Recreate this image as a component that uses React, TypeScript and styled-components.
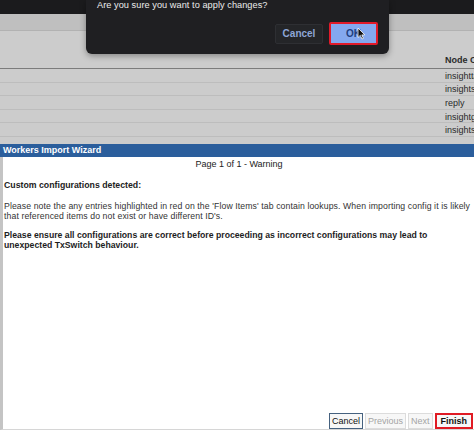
import React from 'react';
import styled, { createGlobalStyle } from 'styled-components';

const GlobalStyle = createGlobalStyle`
  html, body {
    margin: 0;
    padding: 0;
    background: #ffffff;
    font-family: "Liberation Sans", Arial, sans-serif;
  }
`;

const Screen = styled.div`
  position: relative;
  width: 474px;
  height: 430px;
  overflow: hidden;
  display: flex;
  flex-direction: column;
  background: #ffffff;
`;

const DarkStrip = styled.div`
  height: 14px;
  background: #1b1b1d;
  flex-shrink: 0;
`;

const Toolbar = styled.div`
  height: 16px;
  background: #bfbfbf;
  border-bottom: 1px solid #b2b2b2;
  flex-shrink: 0;
`;

const TableArea = styled.div`
  background: #cccccc;
  display: flex;
  flex-direction: column;
  flex-shrink: 0;
  padding-bottom: 7px;
`;

const HeaderRow = styled.div`
  height: 38px;
  display: grid;
  grid-template-columns: 1fr 29px;
  align-items: end;
  border-bottom: 1px solid #7c7c7c;
  box-sizing: border-box;
`;

const Row = styled.div`
  height: 13.6px;
  display: grid;
  grid-template-columns: 1fr 29px;
  align-items: center;
  border-bottom: 1px solid #bdbdbd;
  box-sizing: border-box;
  padding-top: 1px;
`;

const Cell = styled.div<{ $bold?: boolean }>`
  font-size: 9px;
  font-weight: ${(p) => (p.$bold ? 700 : 400)};
  color: #2a2a2a;
  white-space: nowrap;
  overflow: hidden;
  padding-bottom: ${(p) => (p.$bold ? '3px' : '0')};
`;

const Wizard = styled.div`
  flex: 1;
  display: flex;
  flex-direction: column;
`;

const TitleBar = styled.div`
  height: 13px;
  background: #2b5e9c;
  color: #ffffff;
  font-size: 9px;
  font-weight: 700;
  padding-left: 3px;
  display: flex;
  align-items: center;
  flex-shrink: 0;
`;

const Body = styled.div`
  flex: 1;
  display: flex;
  flex-direction: column;
  border-left: 3px solid #c4c4c4;
  border-bottom: 1px solid #d6d6d6;
  padding: 1px 0 0 1px;
  color: #222;
`;

const PageLabel = styled.div`
  text-align: center;
  font-size: 9px;
  line-height: 12px;
  color: #222;
`;

const Heading = styled.div`
  margin-top: 10px;
  font-size: 8.75px;
  font-weight: 700;
  line-height: 11px;
`;

const Para = styled.p<{ $bold?: boolean }>`
  margin: ${(p) => (p.$bold ? '9px' : '10px')} 0 0 0;
  font-size: ${(p) => (p.$bold ? '8.7px' : '8.7px')};
  letter-spacing: ${(p) => (p.$bold ? '0' : '0.1px')};
  line-height: 10px;
  font-weight: ${(p) => (p.$bold ? 700 : 400)};
  color: ${(p) => (p.$bold ? '#1d1d1d' : '#333')};
`;

const Footer = styled.div`
  margin-top: auto;
  display: flex;
  justify-content: flex-end;
  align-items: stretch;
  gap: 2px;
  padding-right: 1px;
  height: 16px;
`;

const WizButton = styled.button<{ $variant: 'focus' | 'off' | 'alert'; $pad?: number }>`
  font-family: "Liberation Sans", Arial, sans-serif;
  font-size: 9px;
  padding: 0 ${(p) => p.$pad ?? 3}px;
  background: #f7f7f7;
  cursor: default;
  color: ${(p) => (p.$variant === 'off' ? '#a4a4a4' : '#111')};
  font-weight: ${(p) => (p.$variant === 'alert' ? 700 : 400)};
  border: ${(p) =>
    p.$variant === 'focus'
      ? '1px solid #45617f'
      : p.$variant === 'alert'
      ? '2px solid #e01b24'
      : '1px solid #dcdcdc'};
`;

const Dialog = styled.div`
  position: absolute;
  left: 86px;
  top: 0;
  width: 303px;
  height: 54px;
  background: #1f1f22;
  border-radius: 0 0 6px 6px;
  box-shadow: 0 2px 6px rgba(0, 0, 0, 0.35);
  display: flex;
  flex-direction: column;
  box-sizing: border-box;
  padding: 0 11px 9px 11px;
`;

const DialogText = styled.div`
  font-size: 9.2px;
  color: #ececec;
  line-height: 10px;
  letter-spacing: 0.05px;
`;

const DialogActions = styled.div`
  margin-top: auto;
  display: flex;
  justify-content: flex-end;
  align-items: center;
  gap: 6px;
`;

const DialogButton = styled.button<{ $primary?: boolean }>`
  position: relative;
  font-family: "Liberation Sans", Arial, sans-serif;
  font-size: 10px;
  font-weight: 700;
  height: ${(p) => (p.$primary ? '23px' : '20px')};
  width: ${(p) => (p.$primary ? '49px' : '48px')};
  padding: 0;
  border-radius: 2px;
  background: ${(p) => (p.$primary ? '#84a8ef' : '#242528')};
  color: ${(p) => (p.$primary ? '#1f3f80' : '#8ea6d6')};
  border: ${(p) => (p.$primary ? '2px solid #e11a2a' : '1px solid #2e2f33')};
`;

const Cursor = styled.svg`
  position: absolute;
  left: 26px;
  top: 3px;
`;

const nodes = ['insightta', 'insightsx', 'reply', 'insightgy', 'insightsz'];

const App: React.FC = () => {
  return (
    <Screen>
      <GlobalStyle />
      <DarkStrip />
      <Toolbar />
      <TableArea>
        <HeaderRow>
          <span />
          <Cell $bold>Node Class</Cell>
        </HeaderRow>
        {nodes.map((n, i) => (
          <Row key={i}>
            <span />
            <Cell>{n}</Cell>
          </Row>
        ))}
      </TableArea>
      <Wizard>
        <TitleBar>Workers Import Wizard</TitleBar>
        <Body>
          <PageLabel>Page 1 of 1 - Warning</PageLabel>
          <Heading>Custom configurations detected:</Heading>
          <Para>
            Please note the any entries highlighted in red on the 'Flow Items' tab contain lookups. When importing config it is likely
            <br />
            that referenced items do not exist or have different ID's.
          </Para>
          <Para $bold>
            Please ensure all configurations are correct before proceeding as incorrect configurations may lead to
            <br />
            unexpected TxSwitch behaviour.
          </Para>
          <Footer>
            <WizButton $variant="focus" $pad={2}>Cancel</WizButton>
            <WizButton $variant="off" $pad={2}>Previous</WizButton>
            <WizButton $variant="off" $pad={2}>Next</WizButton>
            <WizButton $variant="alert" $pad={4}>Finish</WizButton>
          </Footer>
        </Body>
      </Wizard>
      <Dialog>
        <DialogText>Are you sure you want to apply changes?</DialogText>
        <DialogActions>
          <DialogButton>Cancel</DialogButton>
          <DialogButton $primary>
            OK
            <Cursor width="9" height="13" viewBox="0 0 9 13">
              <path d="M1 1 L1 10.5 L3.3 8.4 L5 12 L6.4 11.3 L4.8 7.9 L7.8 7.9 Z" fill="#111" stroke="#fff" strokeWidth="0.8" />
            </Cursor>
          </DialogButton>
        </DialogActions>
      </Dialog>
    </Screen>
  );
};

export default App;
